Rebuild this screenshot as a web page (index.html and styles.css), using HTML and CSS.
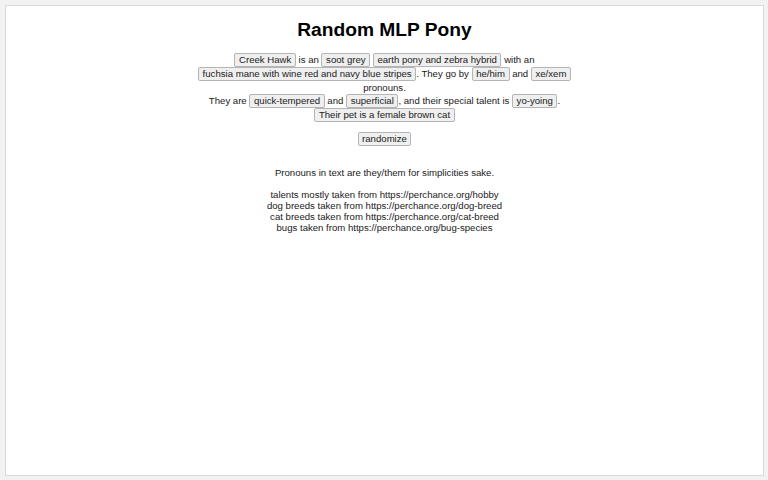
FILE: index.html
```html
<!DOCTYPE html>
<html lang="en">
<head>
<meta charset="utf-8">
<title>Random MLP Pony</title>
<link rel="stylesheet" href="styles.css">
</head>
<body>
<main class="page">
  <h1 class="title">Random MLP Pony</h1>
  <p class="pony">
    <button class="chip">Creek Hawk</button> is an <button class="chip">soot grey</button> <button class="chip">earth pony and zebra hybrid</button> with an
    <button class="chip">fuchsia mane with wine red and navy blue stripes</button>. They go by <button class="chip">he/him</button> and <button class="chip">xe/xem</button> pronouns.<br>
    They are <button class="chip">quick-tempered</button> and <button class="chip">superficial</button>, and their special talent is <button class="chip">yo-yoing</button>.<br>
    <button class="chip">Their pet is a female brown cat</button>
  </p>
  <div class="actions"><button class="chip">randomize</button></div>
  <p class="note">Pronouns in text are they/them for simplicities sake.</p>
  <p class="credits">
    talents mostly taken from https://perchance.org/hobby<br>
    dog breeds taken from https://perchance.org/dog-breed<br>
    cat breeds taken from https://perchance.org/cat-breed<br>
    bugs taken from https://perchance.org/bug-species
  </p>
</main>
</body>
</html>
```

FILE: styles.css
```css
html, body {
  margin: 0;
  padding: 0;
}

body {
  background: #f2f2f2;
  padding: 5px 4px 4px 5px;
  font-family: "Liberation Sans", Arial, sans-serif;
  font-size: 9.6px;
  color: #1a1a1a;
}

.page {
  box-sizing: border-box;
  height: 471px;
  background: #fff;
  border: 1px solid #dadada;
  text-align: center;
  padding-top: 13px;
}

.title {
  font-size: 19.2px;
  line-height: 22px;
  margin: 0 0 12px;
  color: #000;
}

.pony {
  width: 379px;
  margin: 0 auto;
  line-height: 13px;
}

.chip {
  font-family: inherit;
  font-size: 9.6px;
  line-height: 10px;
  color: #1a1a1a;
  background: #efefef;
  border: 1px solid #b4b4b4;
  border-radius: 2px;
  padding: 1px 3.6px;
  margin: 0;
}

.actions {
  margin-top: 10px;
}

.note {
  margin: 21px 0 0;
  line-height: 11px;
}

.credits {
  margin: 11px 0 0;
  line-height: 11px;
}
```
